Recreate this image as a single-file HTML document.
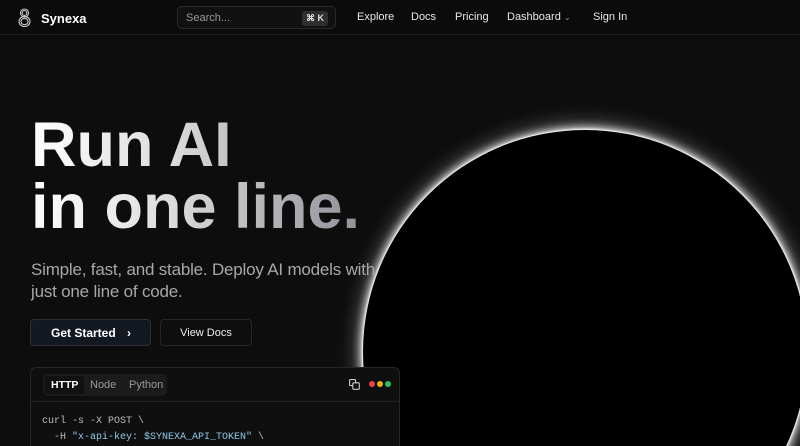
<!DOCTYPE html>
<html><head><meta charset="utf-8"><style>
*{margin:0;padding:0;box-sizing:border-box}
html{width:800px;height:446px;overflow:hidden}
body{width:800px;height:446px;overflow:hidden;background:#0d0d0d;font-family:"Liberation Sans",sans-serif;color:#fff;position:relative}
.wrap{position:absolute;left:0;top:0;width:800px;height:446px;overflow:hidden}
.nav{position:absolute;left:0;top:0;width:800px;height:35px;border-bottom:1px solid #222;background:#0b0b0b}
.logo{position:absolute;left:18px;top:8px}
.brand{position:absolute;left:41px;top:11px;font-weight:bold;font-size:13px}
.search{position:absolute;left:177px;top:6px;width:159px;height:23px;border:1px solid #2a2a2a;border-radius:5px;background:#111}
.search span{position:absolute;left:8px;top:5px;font-size:11px;color:#999}
.search b{position:absolute;right:7px;top:4px;background:#2e2e2e;color:#ddd;font-size:9px;padding:2px 4px;border-radius:3px}
.nl{position:absolute;top:11px;font-size:11px;color:#e8e8e8}
.cwrap{position:absolute;left:330px;top:100px;width:470px;height:346px;overflow:hidden}
.circ{position:absolute;left:33px;top:30px;width:444px;height:444px;border-radius:50%;background:#000;box-shadow:0 0 2px 1px #fff,0 0 8px 3px rgba(255,255,255,.8),0 0 20px 6px rgba(255,255,255,.35)}
h1{position:absolute;left:31px;top:114px;font-size:63px;line-height:62px;font-weight:bold;background:linear-gradient(90deg,#fff 0%,#ddd 40%,#8a8a92 100%);-webkit-background-clip:text;background-clip:text;color:transparent;width:345px}
.sub{position:absolute;left:31px;top:259px;font-size:17px;line-height:22px;color:#a8a8a8;width:380px;letter-spacing:-0.2px;white-space:nowrap}
.b1{position:absolute;left:30px;top:319px;width:121px;height:27px;border:1px solid #2a2f38;border-radius:4px;background:#141820;font-weight:bold;font-size:12px;padding:6px 0 0 20px}
.b2{position:absolute;left:160px;top:319px;width:92px;height:27px;border:1px solid #262626;border-radius:4px;background:#0e0e0e;font-size:11px;text-align:center;padding-top:7px;color:#eee}
.code{position:absolute;left:30px;top:367px;width:370px;height:79px;border:1px solid #262626;border-bottom:none;border-radius:6px 6px 0 0;background:#0f0f0f}
.tabs{position:absolute;left:12px;top:6px;width:124px;height:22px;background:#1b1b1b;border-radius:5px}
.tabs span{position:absolute;top:5px;font-size:11px;color:#999}
.sep{position:absolute;left:0;top:33px;width:100%;height:1px;background:#222}
pre{position:absolute;left:11px;top:46px;font-family:"Liberation Mono",monospace;font-size:10px;line-height:15.5px;color:#bbb}
.dot{position:absolute;top:13px;width:6px;height:6px;border-radius:50%}
</style></head><body><div class="wrap">
<div class="cwrap"><div class="circ"></div></div>
<div class="nav">
<svg class="logo" width="13" height="19" viewBox="0 0 13 19" fill="none" stroke="#ccc" stroke-width="1.1"><ellipse cx="6.5" cy="5" rx="4" ry="4"/><ellipse cx="6.5" cy="13.5" rx="5.5" ry="5"/><ellipse cx="6.5" cy="5" rx="2.3" ry="2.5"/><ellipse cx="6.5" cy="13.5" rx="3.5" ry="3.2"/></svg>
<div class="brand">Synexa</div>
<div class="search"><span>Search...</span><b>⌘ K</b></div>
<div class="nl" style="left:357px">Explore</div>
<div class="nl" style="left:411px">Docs</div>
<div class="nl" style="left:455px">Pricing</div>
<div class="nl" style="left:507px">Dashboard <span style="font-size:8px;color:#999">⌄</span></div>
<div class="nl" style="left:593px">Sign In</div>
</div>
<h1>Run AI<br>in one line.</h1>
<div class="sub">Simple, fast, and stable. Deploy AI models with<br>just one line of code.</div>
<div class="b1">Get Started <span style="margin-left:8px">›</span></div>
<div class="b2">View Docs</div>
<div class="code">
<div class="tabs"><span style="left:2px;top:2px;background:#111;color:#fff;font-weight:bold;padding:3px 6px;border-radius:3px;font-size:10.5px">HTTP</span><span style="left:47px">Node</span><span style="left:86px">Python</span></div>
<svg style="position:absolute;left:318px;top:11px" width="11" height="11" viewBox="0 0 11 11" fill="none" stroke="#ccc" stroke-width="1.1"><rect x="0.6" y="0.6" width="6" height="6" rx="1"/><rect x="3.8" y="3.8" width="6.5" height="6.5" rx="1" fill="#0f0f0f"/></svg>
<div class="dot" style="left:338px;background:#e84646"></div>
<div class="dot" style="left:346px;background:#e8b020"></div>
<div class="dot" style="left:354px;background:#2cc35a"></div>
<div class="sep"></div>
<pre>curl -s -X POST \
  -H <span style="color:#8cc8e8">"x-api-key: $SYNEXA_API_TOKEN"</span> \</pre>
</div>
</div></body></html>
